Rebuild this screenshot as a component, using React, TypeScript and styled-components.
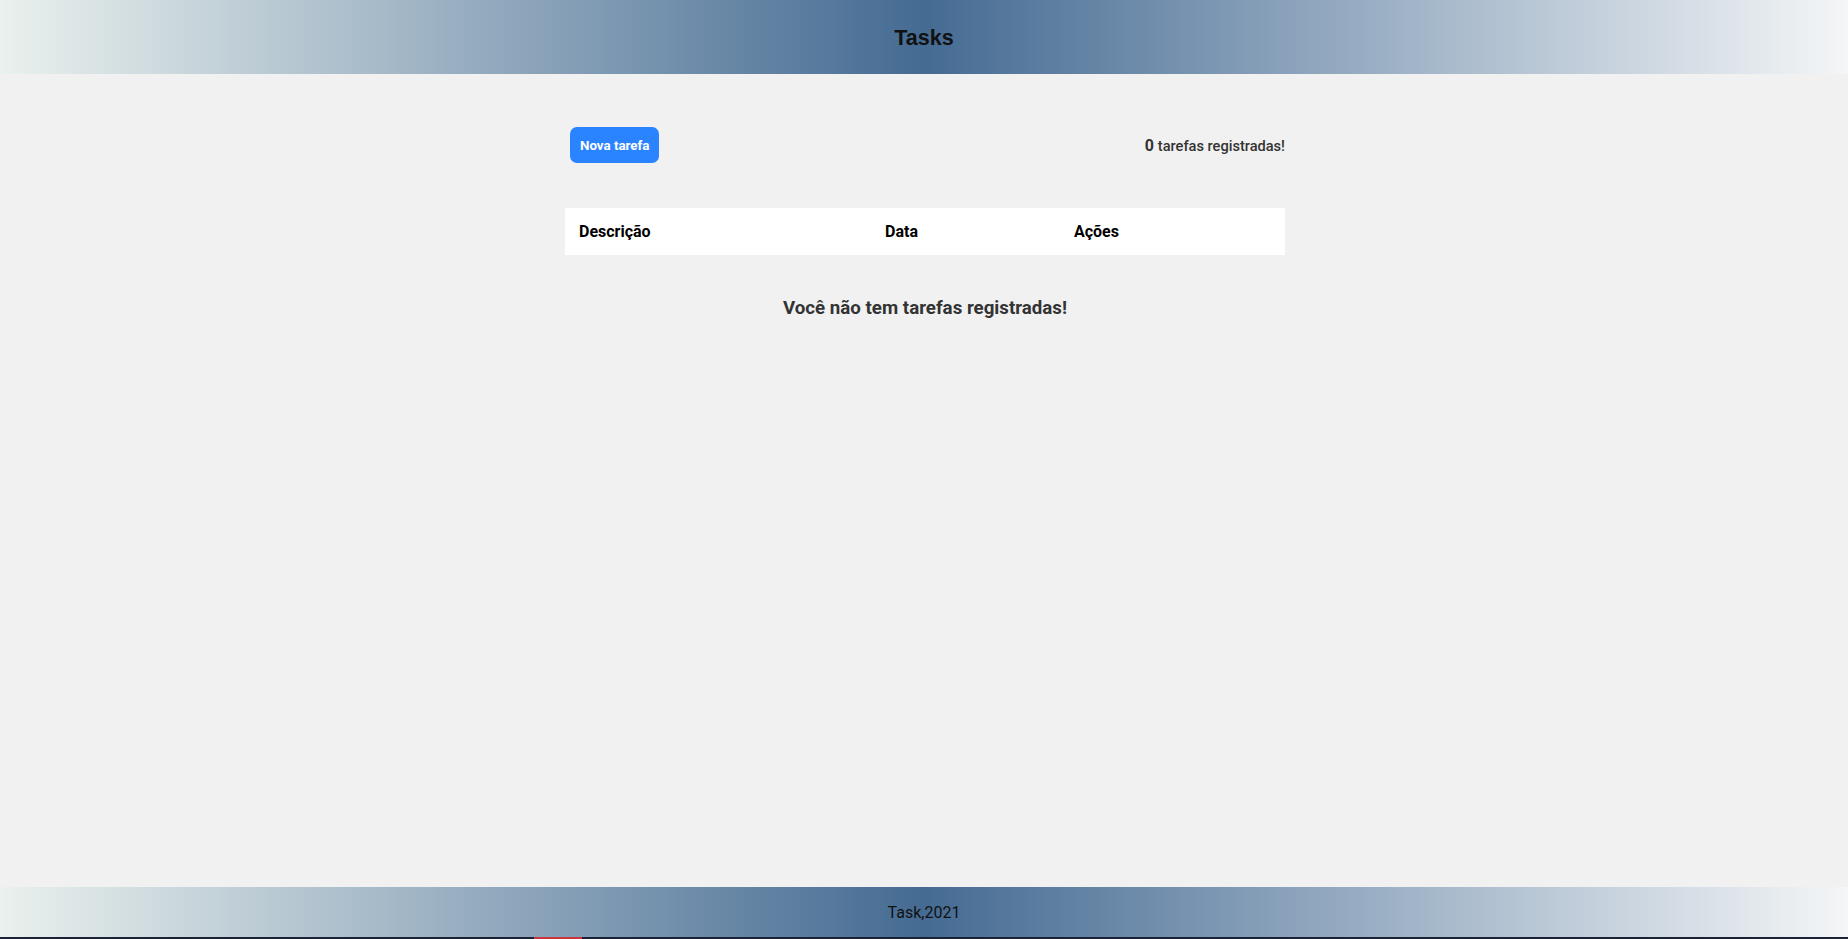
import React from "react";
import styled, { createGlobalStyle } from "styled-components";

const GlobalStyle = createGlobalStyle`
  html, body { margin: 0; padding: 0; }
  body { background: #f1f1f1; font-family: Roboto, "Noto Sans", sans-serif; }
  * { box-sizing: border-box; }
`;

const Page = styled.div`
  min-height: 100vh;
  display: flex;
  flex-direction: column;
`;

const gradient = `linear-gradient(to right, #eaf1ee 0%, #456b93 50%, #f4f6f7 100%)`;

const Header = styled.header`
  height: 74px;
  padding-top: 2px;
  background: ${gradient};
  display: flex;
  align-items: center;
  justify-content: center;
`;

const Title = styled.h1`
  margin: 0;
  font-family: "Liberation Sans", Arial, sans-serif;
  font-weight: 700;
  font-size: 21.5px;
  color: #111;
`;

const Main = styled.main`
  flex: 1;
`;

const Container = styled.div`
  width: 720px;
  margin-left: calc(50% - 359px);
  padding-top: 53px;
`;

const TopBar = styled.div`
  display: flex;
  align-items: center;
  justify-content: space-between;
  padding-left: 5px;
`;

const Button = styled.button`
  height: 36px;
  padding: 0 10px;
  border: none;
  border-radius: 7px;
  background: #2b84ff;
  color: #fff;
  font-family: Roboto, sans-serif;
  font-weight: 700;
  font-size: 13.33px;
  cursor: pointer;
`;

const Counter = styled.p`
  margin: 0;
  color: #333;
  font-size: 14.6px;
  font-weight: 500;
`;

const Count = styled.strong`
  font-size: 16px;
  font-weight: 700;
  margin-right: 4px;
`;

const TableHead = styled.div`
  margin-top: 45px;
  height: 47px;
  background: #fff;
  display: grid;
  grid-template-columns: 306px 189px 1fr;
  align-items: center;
`;

const Th = styled.div`
  padding-left: 14px;
  font-weight: 700;
  font-size: 16px;
  color: #000;
`;

const Empty = styled.h3`
  margin: 42px 0 0;
  text-align: center;
  font-size: 18.72px;
  font-weight: 700;
  color: #333;
`;

const Footer = styled.footer`
  height: 50px;
  background: ${gradient};
  display: flex;
  align-items: center;
  justify-content: center;
  font-size: 16px;
  color: #111;
`;

const BottomStrip = styled.div`
  height: 2px;
  background: #1c2236;
  display: flex;
`;

const StripMark = styled.span`
  margin-left: 534px;
  width: 48px;
  background: #c8373c;
`;

export default function App() {
  return (
    <>
      <GlobalStyle />
      <Page>
        <Header>
          <Title>Tasks</Title>
        </Header>
        <Main>
          <Container>
            <TopBar>
              <Button>Nova tarefa</Button>
              <Counter>
                <Count>0</Count>tarefas registradas!
              </Counter>
            </TopBar>
            <TableHead>
              <Th>Descrição</Th>
              <Th>Data</Th>
              <Th>Ações</Th>
            </TableHead>
            <Empty>Você não tem tarefas registradas!</Empty>
          </Container>
        </Main>
        <Footer>Task,2021</Footer>
        <BottomStrip>
          <StripMark />
        </BottomStrip>
      </Page>
    </>
  );
}
